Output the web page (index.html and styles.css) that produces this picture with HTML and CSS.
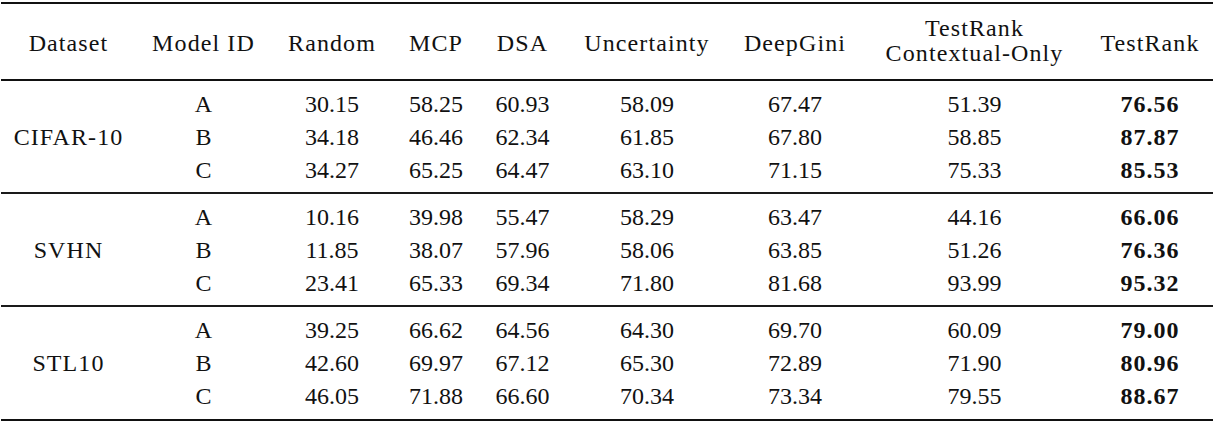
FILE: index.html
```html
<!DOCTYPE html>
<html lang="en">
<head>
<meta charset="utf-8">
<title>TestRank results</title>
<link rel="stylesheet" href="styles.css">
</head>
<body>
<table class="results">
  <colgroup>
    <col class="w1"><col class="w2"><col class="w3"><col class="w4"><col class="w5"><col class="w6"><col class="w7"><col class="w8"><col class="w9">
  </colgroup>
  <thead>
    <tr>
      <th class="single">Dataset</th>
      <th class="single">Model ID</th>
      <th class="single">Random</th>
      <th class="single">MCP</th>
      <th class="single">DSA</th>
      <th class="single">Uncertainty</th>
      <th class="single">DeepGini</th>
      <th class="double"><span class="hl">TestRank</span><span class="hl">Contextual-Only</span></th>
      <th class="single">TestRank</th>
    </tr>
  </thead>
  <tbody class="group">
    <tr class="first">
      <td class="ds" rowspan="3">CIFAR-10</td>
      <td>A</td><td>30.15</td><td>58.25</td><td>60.93</td><td>58.09</td><td>67.47</td><td>51.39</td><td class="best">76.56</td>
    </tr>
    <tr>
      <td>B</td><td>34.18</td><td>46.46</td><td>62.34</td><td>61.85</td><td>67.80</td><td>58.85</td><td class="best">87.87</td>
    </tr>
    <tr class="last">
      <td>C</td><td>34.27</td><td>65.25</td><td>64.47</td><td>63.10</td><td>71.15</td><td>75.33</td><td class="best">85.53</td>
    </tr>
  </tbody>
  <tbody class="group">
    <tr class="first">
      <td class="ds" rowspan="3">SVHN</td>
      <td>A</td><td>10.16</td><td>39.98</td><td>55.47</td><td>58.29</td><td>63.47</td><td>44.16</td><td class="best">66.06</td>
    </tr>
    <tr>
      <td>B</td><td>11.85</td><td>38.07</td><td>57.96</td><td>58.06</td><td>63.85</td><td>51.26</td><td class="best">76.36</td>
    </tr>
    <tr class="last">
      <td>C</td><td>23.41</td><td>65.33</td><td>69.34</td><td>71.80</td><td>81.68</td><td>93.99</td><td class="best">95.32</td>
    </tr>
  </tbody>
  <tbody class="group final">
    <tr class="first">
      <td class="ds" rowspan="3">STL10</td>
      <td>A</td><td>39.25</td><td>66.62</td><td>64.56</td><td>64.30</td><td>69.70</td><td>60.09</td><td class="best">79.00</td>
    </tr>
    <tr>
      <td>B</td><td>42.60</td><td>69.97</td><td>67.12</td><td>65.30</td><td>72.89</td><td>71.90</td><td class="best">80.96</td>
    </tr>
    <tr class="last">
      <td>C</td><td>46.05</td><td>71.88</td><td>66.60</td><td>70.34</td><td>73.34</td><td>79.55</td><td class="best">88.67</td>
    </tr>
  </tbody>
</table>
</body>
</html>
```

FILE: styles.css
```css
html, body {
  margin: 0;
  padding: 0;
  background: #ffffff;
}

body {
  font-family: "Liberation Serif", "Times New Roman", serif;
  font-size: 24px;
  color: #111111;
}

.results {
  margin: 2px 0 0 1px;
  width: 1212px;
  table-layout: fixed;
  border-collapse: separate;
  border-spacing: 0;
}

.w1 { width: 135px; }
.w2 { width: 135px; }
.w3 { width: 122px; }
.w4 { width: 86px; }
.w5 { width: 87px; }
.w6 { width: 162px; }
.w7 { width: 134px; }
.w8 { width: 225px; }
.w9 { width: 126px; }

.results th {
  font-weight: normal;
  text-align: center;
  letter-spacing: 1.1px;
  border-top: 2px solid #111111;
  border-bottom: 2px solid #111111;
  padding: 0;
  line-height: 25px;
  white-space: nowrap;
}

.results th.single {
  vertical-align: top;
  padding-top: 27px;
}

.results th.double {
  vertical-align: top;
  padding-top: 12px;
  padding-bottom: 13px;
}

.hl {
  display: block;
}

.results td {
  text-align: center;
  padding: 0;
  line-height: 33px;
  white-space: nowrap;
}

.results td.ds {
  letter-spacing: 1.1px;
  vertical-align: middle;
  padding-top: 7px;
  padding-bottom: 5px;
  border-bottom: 2px solid #1a1a1a;
}

.results tr.first td {
  padding-top: 7px;
}

.results tr.last td {
  padding-bottom: 5px;
  border-bottom: 2px solid #1a1a1a;
}

.results .final tr.last td,
.results .final td.ds {
  padding-bottom: 6px;
  border-bottom-color: #111111;
}

.results td.best {
  font-weight: bold;
  letter-spacing: 1px;
}
```
